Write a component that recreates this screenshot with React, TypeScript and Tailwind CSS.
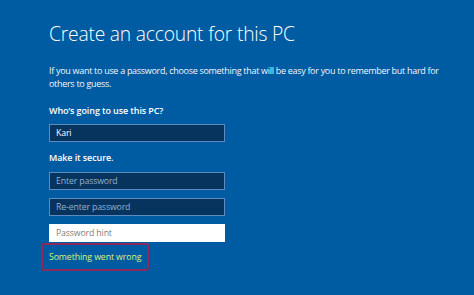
export default function App() {
  const field =
    'w-[176px] h-[18px] border border-[#5b8cbd] bg-[#07335f] px-[6px] text-[8.75px] leading-[16px] tracking-[-0.15px] outline-none'

  return (
    <div className="w-[474px] h-[295px] overflow-hidden bg-[#005ca2] pl-[49px] pt-[21px] font-['Open_Sans',sans-serif] text-white">
      <h1 className="text-[19.25px] font-light leading-[26px] tracking-[-0.2px] whitespace-nowrap">Create an account for this PC</h1>

      <p className="mt-[17px] text-[9px] leading-[13px] tracking-[-0.3px] text-[#f2f6fb] whitespace-nowrap">
        If you want to use a password, choose something that will be easy for you to remember but hard for
        <br />
        others to guess.
      </p>

      <p className="mt-[14px] text-[9px] font-semibold leading-[13px] tracking-[-0.1px]">Who’s going to use this PC?</p>
      <div className={`mt-[7px] ${field} text-white`}>Kari</div>

      <p className="mt-[9px] text-[9px] font-semibold leading-[13px] tracking-[-0.1px]">Make it secure.</p>
      <div className="mt-[8px] flex flex-col gap-[8px]">
        <input className={`${field} placeholder-[#97b0cb]`} placeholder="Enter password" readOnly />
        <input className={`${field} placeholder-[#97b0cb]`} placeholder="Re-enter password" readOnly />
        <input
          className="w-[176px] h-[18px] border border-white bg-white px-[6px] text-[8.75px] leading-[16px] tracking-[-0.15px] text-black placeholder-[#808080] outline-none"
          placeholder="Password hint"
          readOnly
        />
      </div>

      <div className="-ml-[8px] mt-[1px] w-[108px] h-[28px] rounded-[3px] border-2 border-[#872a5e] pl-[6px] flex items-center">
        <span className="text-[8.75px] leading-[13px] tracking-[-0.1px] text-[#d7f27e] whitespace-nowrap">Something went wrong</span>
      </div>
    </div>
  )
}
